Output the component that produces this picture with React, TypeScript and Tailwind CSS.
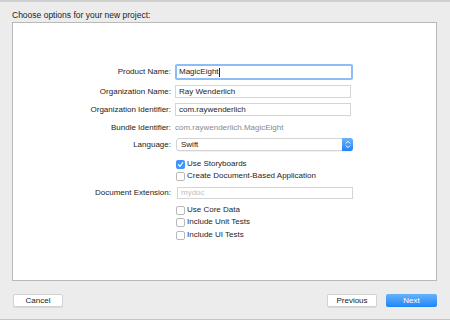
import React from "react";

// rows of the options form: label on the left, control on the right
type Row =
  | { kind: "field"; label: string; value: string; focused?: boolean; placeholder?: boolean; mt: string; h: string }
  | { kind: "text"; label: string; value: string; mt: string; h: string }
  | { kind: "popup"; label: string; value: string; mt: string; h: string }
  | { kind: "check"; text: string; checked?: boolean; mt: string; h: string };

const rows: Row[] = [
  { kind: "field", label: "Product Name:", value: "MagicEight", focused: true, mt: "mt-0", h: "h-[16px]" },
  { kind: "field", label: "Organization Name:", value: "Ray Wenderlich", mt: "mt-[5px]", h: "h-[13px]" },
  { kind: "field", label: "Organization Identifier:", value: "com.raywenderlich", mt: "mt-[5px]", h: "h-[13px]" },
  { kind: "text", label: "Bundle Identifier:", value: "com.raywenderlich.MagicEight", mt: "mt-[5px]", h: "h-[14px]" },
  { kind: "popup", label: "Language:", value: "Swift", mt: "mt-[3px]", h: "h-[13px]" },
  { kind: "check", text: "Use Storyboards", checked: true, mt: "mt-[7px]", h: "h-[12px]" },
  { kind: "check", text: "Create Document-Based Application", mt: "mt-0", h: "h-[12px]" },
  { kind: "field", label: "Document Extension:", value: "mydoc", placeholder: true, mt: "mt-[5px]", h: "h-[12px]" },
  { kind: "check", text: "Use Core Data", mt: "mt-[5px]", h: "h-[12px]" },
  { kind: "check", text: "Include Unit Tests", mt: "mt-0", h: "h-[12px]" },
  { kind: "check", text: "Include UI Tests", mt: "mt-[1px]", h: "h-[12px]" },
];

function Checkbox({ checked }: { checked?: boolean }) {
  if (checked) {
    return (
      <span className="w-[9px] h-[9px] rounded-[2px] bg-[#3d96f8] flex items-center justify-center">
        <svg width="7" height="7" viewBox="0 0 10 10">
          <path d="M2 5.2 L4.2 7.6 L8.2 2.2" fill="none" stroke="white" strokeWidth="1.6" strokeLinecap="round" strokeLinejoin="round" />
        </svg>
      </span>
    );
  }
  return <span className="w-[9px] h-[9px] rounded-[2px] border border-[#b9b9b9] bg-white" />;
}

function Control({ row }: { row: Row }) {
  if (row.kind === "field") {
    if (row.focused) {
      return (
        <div className="w-[178px] h-full rounded-[2px] border-[2px] border-[#8dbcf6] bg-white flex items-center pl-[2px] text-[#1e1e1e]">
          <span>{row.value}</span>
          <span className="w-px h-[9px] bg-[#222]" />
        </div>
      );
    }
    return (
      <div className={`w-[176px] h-full border border-[#d5d5d5] bg-white flex items-center pl-[3px] ${row.placeholder ? "text-[#c0c0c0] ml-[2px]" : "text-[#1e1e1e]"}`}>
        {row.value}
      </div>
    );
  }
  if (row.kind === "text") {
    return <div className="text-[#8a8a8a]">{row.value}</div>;
  }
  if (row.kind === "popup") {
    return (
      <div className="w-[177px] ml-[1px] h-full rounded-[3px] border border-[#d3d3d3] bg-white flex items-center justify-between shadow-[0_1px_0_rgba(0,0,0,0.05)]">
        <span className="pl-[4px] text-[#1e1e1e]">{row.value}</span>
        <span className="w-[11px] h-[13px] -mr-px -my-px rounded-r-[3px] bg-gradient-to-b from-[#6cb3fa] to-[#1a82f7] flex items-center justify-center">
          <svg width="6" height="9" viewBox="0 0 6 9">
            <path d="M1 3.3 L3 1.3 L5 3.3 M1 5.7 L3 7.7 L5 5.7" fill="none" stroke="white" strokeWidth="1" strokeLinecap="round" strokeLinejoin="round" />
          </svg>
        </span>
      </div>
    );
  }
  return (
    <div className="flex items-center gap-[2px] ml-[1px] text-[#1e1e1e]">
      <Checkbox checked={row.checked} />
      <span>{row.text}</span>
    </div>
  );
}

export default function App() {
  return (
    <div className="w-[450px] h-[320px] bg-[#ececec] border-t-[2px] border-t-[#cfcfcf] border-b border-b-[#c4c4c4] flex flex-col text-[8px] leading-none font-['Liberation_Sans',Arial,sans-serif] overflow-hidden">
      <div className="pl-[12px] pt-[9px] h-[20px] text-[8.5px] text-[#222]">Choose options for your new project:</div>

      <div className="mx-[12px] mr-[13px] h-[259px] bg-white border border-[#b9b9b9] pt-[41px] flex flex-col">
        {rows.map((row, i) => (
          <div key={i} className={`flex items-center ${row.mt} ${row.h}`}>
            <div className="w-[158px] text-right text-[#222]">
              {"label" in row ? row.label : ""}
            </div>
            <div className="ml-[4px] h-full flex items-center">
              <Control row={row} />
            </div>
          </div>
        ))}
      </div>

      <div className="mt-[13px] px-[13px] flex items-center">
        <button className="w-[50px] h-[13px] bg-white rounded-[2px] border border-[#d2d2d2] shadow-[0_1px_0_rgba(0,0,0,0.08)] text-[#222] text-[8px] leading-none">
          Cancel
        </button>
        <div className="flex-1" />
        <button className="w-[50px] h-[13px] bg-white rounded-[2px] border border-[#d2d2d2] shadow-[0_1px_0_rgba(0,0,0,0.08)] text-[#222] text-[8px] leading-none">
          Previous
        </button>
        <button className="ml-[9px] w-[51px] h-[13px] rounded-[2px] bg-gradient-to-b from-[#65b1fb] to-[#1c85f7] text-white text-[8px] leading-none">
          Next
        </button>
      </div>
    </div>
  );
}
